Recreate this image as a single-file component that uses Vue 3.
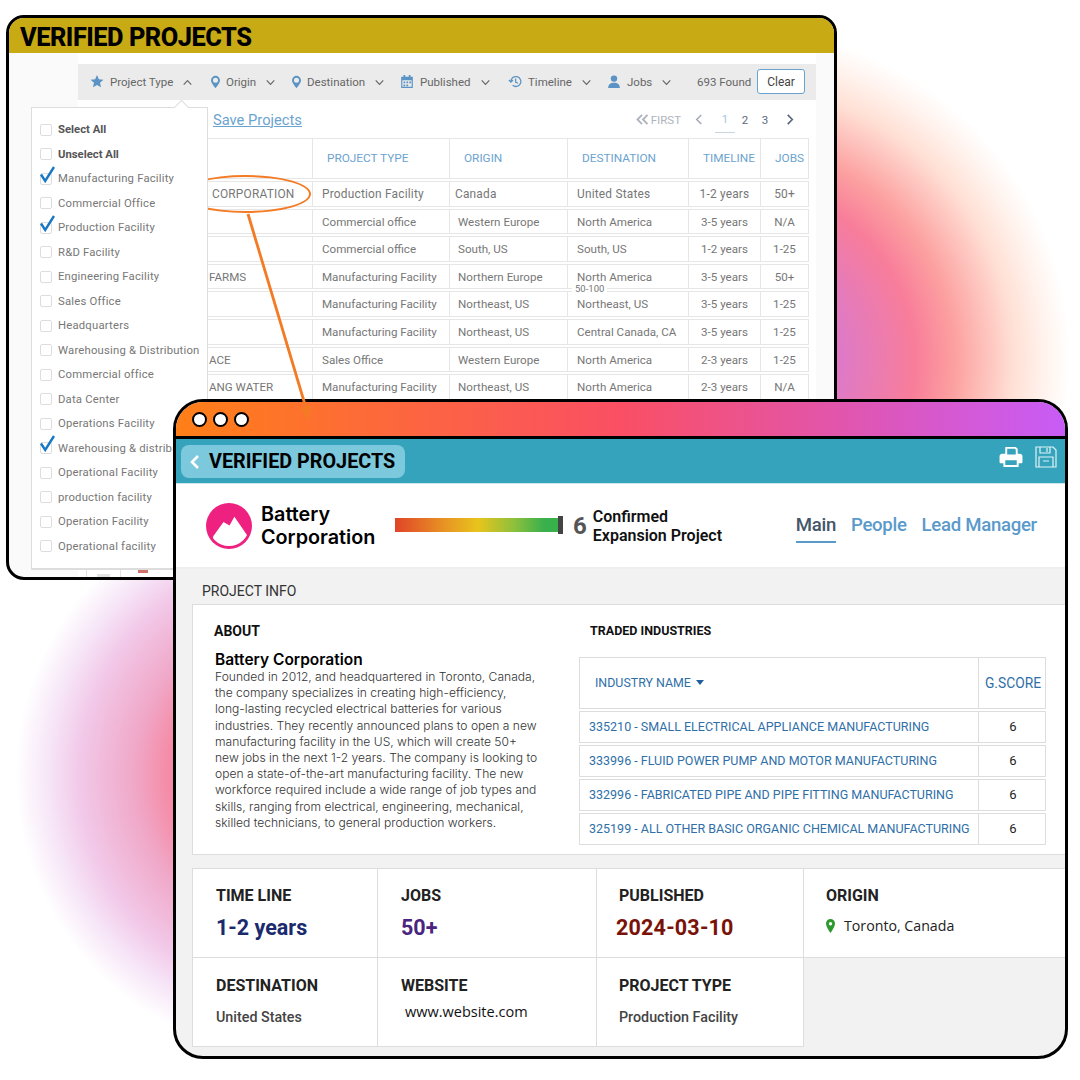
<script setup>
const filters = [
  { label: 'Project Type', icon: 'star', open: true },
  { label: 'Origin', icon: 'pin' },
  { label: 'Destination', icon: 'pin' },
  { label: 'Published', icon: 'calendar' },
  { label: 'Timeline', icon: 'history' },
  { label: 'Jobs', icon: 'user' }
]

const options = [
  { label: 'Select All', bold: true },
  { label: 'Unselect All', bold: true },
  { label: 'Manufacturing Facility', checked: true },
  { label: 'Commercial Office' },
  { label: 'Production Facility', checked: true },
  { label: 'R&D Facility' },
  { label: 'Engineering Facility' },
  { label: 'Sales Office' },
  { label: 'Headquarters' },
  { label: 'Warehousing & Distribution' },
  { label: 'Commercial office' },
  { label: 'Data Center' },
  { label: 'Operations Facility' },
  { label: 'Warehousing & distribution', checked: true },
  { label: 'Operational Facility' },
  { label: 'production facility' },
  { label: 'Operation Facility' },
  { label: 'Operational facility' }
]

const projects = [
  ['CORPORATION', 'Production Facility', 'Canada', 'United States', '1-2 years', '50+'],
  ['', 'Commercial office', 'Western Europe', 'North America', '3-5 years', 'N/A'],
  ['', 'Commercial office', 'South, US', 'South, US', '1-2 years', '1-25'],
  ['FARMS', 'Manufacturing Facility', 'Northern Europe', 'North America', '3-5 years', '50+'],
  ['', 'Manufacturing Facility', 'Northeast, US', 'Northeast, US', '3-5 years', '1-25'],
  ['', 'Manufacturing Facility', 'Northeast, US', 'Central Canada, CA', '3-5 years', '1-25'],
  ['ACE', 'Sales Office', 'Western Europe', 'North America', '2-3 years', '1-25'],
  ['ANG WATER', 'Manufacturing Facility', 'Northeast, US', 'North America', '2-3 years', 'N/A']
]

const industries = [
  '335210 - SMALL ELECTRICAL APPLIANCE MANUFACTURING',
  '333996 - FLUID POWER PUMP AND MOTOR MANUFACTURING',
  '332996 - FABRICATED PIPE AND PIPE FITTING MANUFACTURING',
  '325199 - ALL OTHER BASIC ORGANIC CHEMICAL MANUFACTURING'
]
</script>

<template>
  <div class="canvas">
    <div class="blob blob-right"></div>
    <div class="blob blob-left"></div>

    <section class="back-window">
      <h1 class="back-title">VERIFIED PROJECTS</h1>
      <div class="back-body">
        <div class="toolbar">
          <div v-for="f in filters" :key="f.label" class="filter">
            <svg v-if="f.icon === 'star'" class="f-icon" viewBox="0 0 24 24"><path d="M12 1l3.200 7.300 7.800.8-5.800 5.200 1.700 7.700L12 18.100 5.100 22l1.700-7.700L1 9.100l7.800-.8z" fill="#5b93c4"/></svg>
            <svg v-else-if="f.icon === 'pin'" class="f-icon pin" viewBox="4 1 16 22"><path fill-rule="evenodd" d="M12 1a8 8 0 0 0-8 8c0 5.500 8 14 8 14s8-8.500 8-14a8 8 0 0 0-8-8zm0 3.500a4.500 4.500 0 1 1 0 9 4.500 4.500 0 0 1 0-9z" fill="#5b93c4"/></svg>
            <svg v-else-if="f.icon === 'calendar'" class="f-icon" viewBox="0 0 24 24"><path fill-rule="evenodd" d="M2 4h4V1h3v3h6V1h3v3h4v19H2zm2 6v11h16V10zm2 2h3v3H6zm5 0h3v3h-3zm5 0h3v3h-3zM6 17h3v3H6zm5 0h3v3h-3z" fill="#5b93c4"/></svg>
            <svg v-else-if="f.icon === 'history'" class="f-icon" viewBox="0 0 24 24" fill="none" stroke="#5b93c4" stroke-width="2.200"><path d="M5 12a8.500 8.500 0 1 1 3 6.500M1.500 9.500 5 13l3.500-3.500M13 7v6l4 2"/></svg>
            <svg v-else class="f-icon" viewBox="0 0 24 24"><circle cx="12" cy="7" r="5.500" fill="#5b93c4"/><path d="M2 23c0-6 4-9 10-9s10 3 10 9z" fill="#5b93c4"/></svg>
            <span class="f-label">{{ f.label }}</span>
            <svg class="f-chevron" viewBox="0 0 10 7" fill="none" stroke="#666" stroke-width="1.300"><path :d="f.open ? 'M.8 5.800 5 1.500l4.200 4.300' : 'M.8 1.200 5 5.500l4.200-4.300'"/></svg>
          </div>
          <span class="found">693 Found</span>
          <button class="clear">Clear</button>
        </div>

        <div class="list-head">
          <a class="save-link">Save Projects</a>
          <div class="pager">
            <svg class="pg-first" viewBox="0 0 14 12" fill="none" stroke="#aeb4bd" stroke-width="2"><path d="M6.500 1 1.500 6l5 5M12.500 1l-5 5 5 5"/></svg>
            <span class="pg-word">FIRST</span>
            <svg class="pg-prev" viewBox="0 0 8 12" fill="none" stroke="#a4aab4" stroke-width="1.600"><path d="M6.500 1 1.500 6l5 5"/></svg>
            <span class="pg-num active">1</span>
            <span class="pg-num">2</span>
            <span class="pg-num">3</span>
            <svg class="pg-next" viewBox="0 0 8 12" fill="none" stroke="#5d6780" stroke-width="1.800"><path d="M1.500 1l5 5-5 5"/></svg>
          </div>
        </div>

        <div class="table">
          <div class="t-row t-head">
            <span></span><span>PROJECT TYPE</span><span>ORIGIN</span><span>DESTINATION</span><span>TIMELINE</span><span>JOBS</span>
          </div>
          <div v-for="(row, i) in projects" :key="i" class="t-row" :class="{ 't-first': i === 0 }">
            <span v-for="(cell, j) in row" :key="j">{{ cell }}</span>
          </div>
          <span class="range-tag">50-100</span>
        </div>
      </div>

      <div class="circle-mark"></div>

      <div class="stub">
        <i></i><i></i><i class="stub-btn"></i><i class="stub-flag"></i>
      </div>

      <div class="dropdown">
        <span class="caret"></span>
        <label v-for="o in options" :key="o.label" class="option" :class="{ bold: o.bold }">
          <span class="box">
            <svg v-if="o.checked" class="tick" viewBox="0 0 15 17" fill="none" stroke="#1a78c2" stroke-width="2.400"><path d="M1 8.500 5.200 15 14 1"/></svg>
          </span>
          <span class="opt-text">{{ o.label }}</span>
        </label>
      </div>
    </section>

    <svg class="callout" width="340" height="440" viewBox="0 0 340 440">
      <path d="M248 214 306 408" fill="none" stroke="#f47a24" stroke-width="2.800"/>
      <path d="M300 408 312 405 308 420z" fill="#f47a24"/>
    </svg>

    <section class="front-window">
      <div class="title-bar">
        <i class="dot"></i><i class="dot"></i><i class="dot"></i>
      </div>
      <div class="teal-bar">
        <div class="back-pill">
          <svg class="back-arrow" viewBox="0 0 10 16" fill="none" stroke="#fff" stroke-width="2.600"><path d="M8 2 2 8l6 6"/></svg>
          <span>VERIFIED PROJECTS</span>
        </div>
        <div class="teal-icons">
          <svg width="24" height="21" viewBox="0 0 24 22"><path fill-rule="evenodd" d="M6 1h11l2 2v5h2a3 3 0 0 1 3 3v6a1 1 0 0 1-1 1h-3v4H4v-4H1a1 1 0 0 1-1-1v-6a3 3 0 0 1 3-3h3zm2 2v6h9V4l-1-1zM6 15v5h12v-5z" fill="#fff"/></svg>
          <svg width="22" height="22" viewBox="0 0 22 22" fill="none" stroke="#dff3f7" stroke-width="1.200"><path d="M1 1h17l3 3v17H1zM5 1v6h10V1M12 2v4M4 21V11h14v10M8 15h6"/></svg>
        </div>
      </div>

      <div class="company">
        <svg class="logo" viewBox="0 0 46 46">
          <defs><clipPath id="logo-clip"><circle cx="23" cy="22.500" r="20.500"/></clipPath></defs>
          <circle cx="23" cy="23" r="23" fill="#ee2080"/>
          <path d="M7.400 33 17.500 19l6 3.400 4.900-8.700L42 33.500V46H4z" fill="#fff" clip-path="url(#logo-clip)"/>
        </svg>
        <div class="company-name">Battery<br>Corporation</div>
        <div class="meter"><span class="meter-cap"></span></div>
        <span class="score">6</span>
        <div class="score-text">Confirmed<br>Expansion Project</div>
        <nav class="tabs">
          <a class="tab current">Main</a>
          <a class="tab">People</a>
          <a class="tab">Lead Manager</a>
        </nav>
      </div>

      <div class="content">
        <div class="info-label">PROJECT INFO</div>
        <div class="info-panel">
          <div class="about">
            <h3 class="sec-title">ABOUT</h3>
            <h4 class="about-name">Battery Corporation</h4>
            <p class="about-text">Founded in 2012, and headquartered in Toronto, Canada, the company specializes in creating high-efficiency, long-lasting recycled electrical batteries for various industries. They recently announced plans to open a new manufacturing facility in the US, which will create 50+ new jobs in the next 1-2 years. The company is looking to open a state-of-the-art manufacturing facility. The new workforce required include a wide range of job types and skills, ranging from electrical, engineering, mechanical, skilled technicians, to general production workers.</p>
          </div>
          <div class="traded">
            <h3 class="sec-title small">TRADED INDUSTRIES</h3>
            <div class="ind-table">
              <div class="ind-row ind-head">
                <span class="ind-name">INDUSTRY NAME <i class="sort"></i></span>
                <span class="ind-score">G.SCORE</span>
              </div>
              <div v-for="item in industries" :key="item" class="ind-row">
                <span class="ind-name">{{ item }}</span>
                <span class="ind-score">6</span>
              </div>
            </div>
          </div>
        </div>

        <div class="facts">
          <div class="fact">
            <h5>TIME LINE</h5>
            <div class="big navy">1-2 years</div>
          </div>
          <div class="fact">
            <h5>JOBS</h5>
            <div class="big purple">50+</div>
          </div>
          <div class="fact">
            <h5>PUBLISHED</h5>
            <div class="big maroon">2024-03-10</div>
          </div>
          <div class="fact">
            <h5>ORIGIN</h5>
            <div class="origin">
              <svg width="9" height="14" viewBox="0 0 9 14"><path fill-rule="evenodd" d="M4.500 0A4.500 4.500 0 0 0 0 4.500C0 8 4.500 14 4.500 14S9 8 9 4.500A4.500 4.500 0 0 0 4.500 0zm0 3a1.700 1.700 0 1 1 0 3.400 1.700 1.700 0 0 1 0-3.400z" fill="#2e9a2e"/></svg>
              <span>Toronto, Canada</span>
            </div>
          </div>
          <div class="fact">
            <h5>DESTINATION</h5>
            <div class="plain">United States</div>
          </div>
          <div class="fact">
            <h5>WEBSITE</h5>
            <div class="site">www.website.com</div>
          </div>
          <div class="fact">
            <h5>PROJECT TYPE</h5>
            <div class="plain">Production Facility</div>
          </div>
        </div>
      </div>
    </section>
  </div>
</template>

<style>
html, body {
  margin: 0;
  background: #fff;
}
</style>

<style scoped>
.canvas {
  position: relative;
  width: 1080px;
  height: 1080px;
  overflow: hidden;
  background: #fff;
  font-family: Roboto, "Liberation Sans", sans-serif;
}

.blob {
  position: absolute;
  border-radius: 50%;
}

.blob-right {
  left: 410px;
  top: 30px;
  width: 660px;
  height: 660px;
  background: radial-gradient(circle closest-side, #c95fe8 0, #e07ac4 32%, #f87d9a 53%, #fca0a0 65%, #ffe0d5 83%, #fff2ec 92%, #fff 100%);
}

.blob-left {
  left: 16px;
  top: 495px;
  width: 560px;
  height: 560px;
  background: radial-gradient(circle closest-side, #d870d0 20%, #f58aa5 45%, #f0a8c8 58%, #f2c8e8 77%, #f6e4f7 88%, #fff 100%);
}

/* back window */
.back-window {
  position: absolute;
  left: 6px;
  top: 15px;
  width: 825px;
  height: 559px;
  border: 3px solid #000;
  border-radius: 18px;
  background: #fafafa;
  overflow: hidden;
}

.back-title {
  margin: 0;
  height: 35px;
  padding-left: 11px;
  background: #c8aa15;
  color: #000;
  font-size: 25.400px;
  font-weight: 800;
  line-height: 38px;
  letter-spacing: -0.5px;
}

.back-body {
  width: 738px;
  height: 524px;
  margin-left: 69px;
  padding-top: 11px;
  box-sizing: border-box;
  background: #fff;
}

.toolbar {
  display: grid;
  grid-template-columns: 121px 81px 108px 108px 99px 90px 55px 48px;
  align-items: center;
  height: 36px;
  box-sizing: border-box;
  padding: 0 0 1px 12px;
  background: #ebebeb;
  color: #666;
  font-size: 11.500px;
}

.filter {
  display: flex;
  align-items: center;
  white-space: nowrap;
}

.f-icon {
  width: 14px;
  height: 15px;
  margin-right: 6px;
}

.f-icon.pin {
  width: 9px;
  height: 14px;
}

.f-chevron {
  width: 9px;
  height: 7px;
  margin-left: 10px;
  margin-top: 1px;
}

.found {
  white-space: nowrap;
}

.clear {
  width: 48px;
  height: 25px;
  margin-left: 5px;
  border: 1px solid #6ba3cf;
  border-radius: 3px;
  background: #fff;
  color: #444;
  font-family: inherit;
  font-size: 12px;
}

.list-head {
  display: flex;
  align-items: center;
  justify-content: space-between;
  width: 581px;
  height: 38px;
  margin-left: 135px;
  padding-top: 1px;
  box-sizing: border-box;
}

.save-link {
  color: #6ba3cf;
  font-size: 14.700px;
  text-decoration: underline;
}

.pager {
  display: flex;
  align-items: center;
  color: #aeb4bd;
  font-size: 11.500px;
}

.pg-first { width: 13px; height: 11px; margin-right: 2px; }
.pg-prev { width: 8px; height: 11px; margin: 0 12px 0 14px; }
.pg-next { width: 8px; height: 11px; margin-left: 11px; }

.pg-num {
  width: 20px;
  height: 26px;
  line-height: 26px;
  text-align: center;
  color: #5d6780;
}

.pg-num.active {
  color: #a6c6de;
  border-bottom: 1px solid #c8d6e2;
}

.table {
  position: relative;
  width: 728px;
  margin-left: 3px;
  display: flex;
  flex-direction: column;
  gap: 2px;
}

.t-row {
  display: grid;
  grid-template-columns: 232px 137px 118px 121px 72px 48px;
  height: 25.600px;
  box-sizing: border-box;
  border-top: 1px solid #e6e6e6;
  border-bottom: 1px solid #e6e6e6;
  color: #777;
  font-size: 11.600px;
  line-height: 24px;
}

.t-row span {
  padding-left: 9px;
  border-right: 1px solid #e6e6e6;
  white-space: nowrap;
  overflow: hidden;
}

.t-row span:first-child {
  padding-left: 128px;
}

.t-row span:nth-child(3) {
  padding-left: 8px;
}

.t-row span:nth-child(n + 5) {
  padding-left: 0;
  text-align: center;
}

.t-first {
  font-size: 11.900px;
  letter-spacing: 0.2px;
  line-height: 25px;
}

.t-first span:first-child {
  padding-left: 131px;
}

.t-first span:nth-child(3) {
  padding-left: 5px;
}

.t-head {
  height: 41px;
  color: #6ba3cf;
  font-size: 11.800px;
  line-height: 39px;
}

.t-head span:nth-child(n + 2) {
  padding-left: 14px;
  text-align: left;
}

.range-tag {
  position: absolute;
  left: 491px;
  top: 146px;
  padding: 0 3px;
  background: #fff;
  color: #777;
  font-size: 9.500px;
  line-height: 10px;
}

.circle-mark {
  position: absolute;
  left: 171px;
  top: 157px;
  width: 127px;
  height: 34px;
  border: 2.500px solid #f47a24;
  border-radius: 50%;
}

.stub {
  position: absolute;
  left: 71px;
  bottom: 0;
  display: flex;
  width: 125px;
  height: 9px;
  background: #fff;
}

.stub i {
  height: 9px;
  border-right: 1px solid #e2e2e2;
}

.stub i:nth-child(1) { width: 6px; }
.stub i:nth-child(2) { width: 33px; }

.stub .stub-btn {
  position: absolute;
  left: 17px;
  top: 6px;
  width: 13px;
  height: 3px;
  border: 0;
  background: #e4e4e4;
}

.stub .stub-flag {
  position: absolute;
  left: 58px;
  top: 2px;
  width: 10px;
  height: 3px;
  border: 0;
  background: #d0706a;
}

.dropdown {
  position: absolute;
  left: 22px;
  top: 89px;
  width: 177px;
  height: 463px;
  box-sizing: border-box;
  padding-top: 9.500px;
  background: #fff;
  border: 1px solid #ddd;
  border-bottom-width: 2px;
}

.caret {
  position: absolute;
  left: 144px;
  top: -6px;
  width: 10px;
  height: 10px;
  background: #fff;
  border-top: 1px solid #ddd;
  border-left: 1px solid #ddd;
  transform: rotate(45deg);
}

.option {
  display: flex;
  align-items: center;
  height: 24.500px;
  padding-left: 8px;
  color: #777;
  font-size: 11.300px;
  letter-spacing: 0.2px;
  white-space: nowrap;
}

.option.bold {
  font-weight: 700;
  color: #555;
  letter-spacing: 0;
}

.box {
  position: relative;
  flex: none;
  width: 10px;
  height: 10px;
  margin-right: 6px;
  border: 1px solid #ddd;
  border-radius: 2px;
  background: #fff;
}

.tick {
  position: absolute;
  left: -1px;
  top: -8px;
  width: 15px;
  height: 17px;
}

.opt-text {
  overflow: hidden;
}

/* callout */
.callout {
  position: absolute;
  left: 0;
  top: 0;
  z-index: 3;
}

/* front window */
.front-window {
  position: absolute;
  z-index: 2;
  left: 173px;
  top: 399px;
  width: 889px;
  height: 654px;
  border: 3px solid #000;
  border-radius: 30px;
  background: #f2f2f2;
  overflow: hidden;
}

.title-bar {
  display: flex;
  align-items: center;
  gap: 6px;
  height: 34px;
  padding-left: 16px;
  border-bottom: 3px solid #000;
  background: linear-gradient(90deg, #ff7f17 0, #fa4f64 50%, #c85cf7 100%);
}

.dot {
  width: 11px;
  height: 11px;
  border: 2.500px solid #000;
  border-radius: 50%;
  background: #fff;
}

.teal-bar {
  display: flex;
  align-items: center;
  justify-content: space-between;
  height: 44px;
  padding: 0 8px 0 5px;
  background: #35a3bb;
  border-bottom: 1px solid #cfe6ec;
}

.back-pill {
  display: flex;
  align-items: center;
  gap: 9px;
  width: 224px;
  height: 33px;
  box-sizing: border-box;
  padding-left: 9px;
  padding-top: 1px;
  border-radius: 8px;
  background: #7cc8dc;
  color: #000;
  font-size: 19.800px;
  font-weight: 700;
}

.back-arrow {
  width: 10px;
  height: 16px;
}

.teal-icons {
  display: flex;
  gap: 12px;
  margin-bottom: 8px;
}

.company {
  display: flex;
  align-items: center;
  height: 83px;
  padding-left: 30px;
  background: #fff;
  border-bottom: 2px solid #eee;
}

.logo {
  flex: none;
  width: 46px;
  height: 46px;
}

.company-name {
  width: 134px;
  margin-left: 9px;
  color: #000;
  font-family: Inter, sans-serif;
  font-size: 19.800px;
  font-weight: 600;
  line-height: 23px;
  white-space: nowrap;
}

.meter {
  position: relative;
  flex: none;
  width: 166px;
  height: 14px;
  margin-top: -2px;
  background: linear-gradient(90deg, #e04428 0, #e89424 30%, #e8c41c 50%, #8cc03c 72%, #38b04c 90%);
}

.meter-cap {
  position: absolute;
  right: -2px;
  top: -2px;
  width: 5px;
  height: 18px;
  background: #444;
}

.score {
  margin: 0 6px 0 12px;
  color: #555;
  font-size: 24px;
  font-weight: 700;
}

.score-text {
  width: 203px;
  color: #111;
  font-size: 16px;
  font-weight: 600;
  line-height: 19px;
  white-space: nowrap;
}

.tabs {
  display: flex;
  gap: 15px;
  color: #5a9acb;
  font-size: 18.600px;
  font-weight: 500;
  letter-spacing: -0.3px;
  white-space: nowrap;
}

.tab {
  padding-bottom: 5px;
  border-bottom: 2px solid transparent;
  margin-top: 6px;
}

.tab.current {
  color: #45566a;
  border-bottom-color: #5a9acb;
}

.content {
  padding: 14px 0 0 16px;
}

.info-label {
  height: 21px;
  padding-left: 10px;
  color: #333;
  font-size: 14px;
}

.info-panel {
  display: flex;
  width: 880px;
  height: 251px;
  box-sizing: border-box;
  background: #fff;
  border: 1px solid #ddd;
}

.about {
  flex: none;
  width: 386px;
  box-sizing: border-box;
  padding-left: 21px;
}

.sec-title {
  margin: 18px 0 0;
  color: #111;
  font-size: 14px;
  font-weight: 700;
}

.sec-title.small {
  font-size: 12.500px;
  margin-left: 11px;
}

.about-name {
  margin: 11px 0 0 1px;
  color: #000;
  font-family: Inter, sans-serif;
  font-size: 15.500px;
  font-weight: 600;
  line-height: 19px;
}

.about-text {
  width: 323.500px;
  margin: 0 0 0 1px;
  color: #333;
  font-family: Inter, sans-serif;
  font-size: 12.080px;
  font-weight: 300;
  line-height: 16.200px;
}

.traded {
  width: 467px;
}

.ind-table {
  margin-top: 19px;
  display: flex;
  flex-direction: column;
  gap: 2px;
}

.ind-row {
  display: grid;
  grid-template-columns: 398px 69px;
  height: 32px;
  box-sizing: border-box;
  border: 1px solid #ddd;
  color: #2f6fa8;
  font-size: 12.500px;
  line-height: 30px;
}

.ind-head {
  height: 52px;
  line-height: 50px;
  font-size: 12.400px;
}

.ind-head .ind-name {
  padding-left: 15px;
}

.ind-name {
  padding-left: 9px;
  white-space: nowrap;
}

.ind-score {
  border-left: 1px solid #ddd;
  text-align: center;
  color: #222;
  font-size: 13px;
}

.ind-head .ind-score {
  color: #2f6fa8;
  font-size: 13.800px;
}

.sort {
  display: inline-block;
  width: 0;
  height: 0;
  margin-left: 2px;
  vertical-align: 2px;
  border: 4.500px solid transparent;
  border-top: 5px solid #1f5f9c;
  border-bottom: 0;
}

.facts {
  display: grid;
  grid-template-columns: 185px 219px 207px 262px;
  grid-template-rows: 89px 89px;
  width: 873px;
  margin-top: 13px;
  border-left: 1px solid #ddd;
  border-top: 1px solid #ddd;
}

.fact {
  padding: 17px 0 0 22px;
  background: #fff;
  border-right: 1px solid #ddd;
  border-bottom: 1px solid #ddd;
}

.fact:nth-child(4n + 1),
.fact:nth-child(4n + 2) {
  padding-left: 23px;
}

.fact:nth-child(n + 5) {
  padding-top: 18px;
}

.fact h5 {
  margin: 0;
  color: #222;
  font-size: 16px;
  font-weight: 700;
}

.big {
  margin-top: 10px;
  font-size: 21.500px;
  font-weight: 700;
}

.navy { color: #1a2a6c; }
.purple { color: #4a2480; }
.maroon { color: #7a1208; margin-left: -3px; letter-spacing: 0.2px; }

.origin {
  display: flex;
  align-items: center;
  gap: 9px;
  margin-top: 11px;
  color: #222;
  font-family: "Open Sans", sans-serif;
  font-size: 14.200px;
}

.plain {
  margin-top: 14px;
  color: #444;
  font-size: 14.300px;
  font-weight: 500;
}

.site {
  margin: 7px 0 0 4px;
  color: #111;
  font-family: "Open Sans", sans-serif;
  font-size: 14.500px;
}
</style>
